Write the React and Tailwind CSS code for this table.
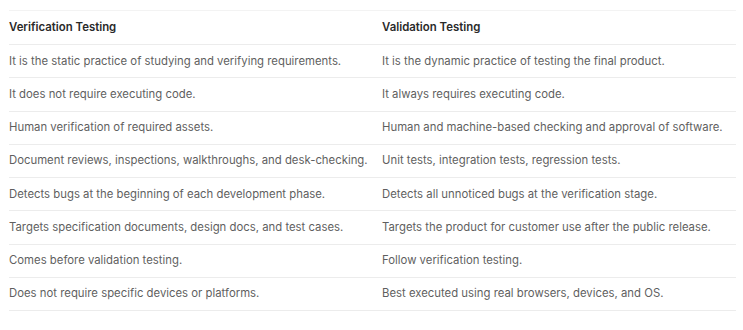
const rows = [
  ["It is the static practice of studying and verifying requirements.", "It is the dynamic practice of testing the final product."],
  ["It does not require executing code.", "It always requires executing code."],
  ["Human verification of required assets.", "Human and machine-based checking and approval of software."],
  ["Document reviews, inspections, walkthroughs, and desk-checking.", "Unit tests, integration tests, regression tests."],
  ["Detects bugs at the beginning of each development phase.", "Detects all unnoticed bugs at the verification stage."],
  ["Targets specification documents, design docs, and test cases.", "Targets the product for customer use after the public release."],
  ["Comes before validation testing.", "Follow verification testing."],
  ["Does not require specific devices or platforms.", "Best executed using real browsers, devices, and OS."],
];

export default function App() {
  return (
    <div className="w-[743px] h-[330px] bg-white pt-[10px] pl-[9px]" style={{ fontFamily: "Inter, 'Noto Sans', sans-serif" }}>
      <div className="w-[727px] border-t border-[#f3f3f3]">
        <div className="flex h-[34px] items-center border-b border-[#ececec] text-[11.4px] font-semibold text-[#2a2a2a] whitespace-nowrap">
          <div className="w-[373px]">Verification Testing</div>
          <div>Validation Testing</div>
        </div>
        {rows.map((r, i) => (
          <div key={i} className="flex h-[33.25px] items-center border-b border-[#ececec] text-[11.35px] text-[#5f5f5f] whitespace-nowrap">
            <div className="w-[373px]">{r[0]}</div>
            <div>{r[1]}</div>
          </div>
        ))}
      </div>
    </div>
  );
}
